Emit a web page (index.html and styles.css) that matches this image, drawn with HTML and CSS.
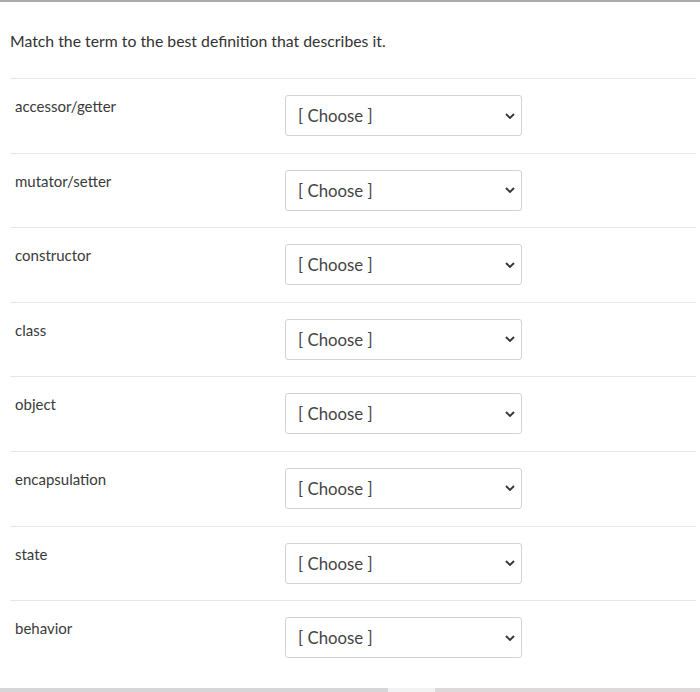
FILE: index.html
```html
<!DOCTYPE html>
<html>
<head>
<meta charset="utf-8">
<link rel="stylesheet" href="styles.css">
</head>
<body>
<div class="page">
  <p class="prompt">Match the term to the best definition that describes it.</p>
  <div class="rows">
    <div class="row"><div class="term">accessor/getter</div><div class="select"><span>[ Choose ]</span><svg class="chev" viewBox="0 0 10 6" width="10" height="6"><path d="M1 1 L5 5 L9 1" fill="none" stroke="#333" stroke-width="1.8"/></svg></div></div>
    <div class="row"><div class="term">mutator/setter</div><div class="select"><span>[ Choose ]</span><svg class="chev" viewBox="0 0 10 6" width="10" height="6"><path d="M1 1 L5 5 L9 1" fill="none" stroke="#333" stroke-width="1.8"/></svg></div></div>
    <div class="row"><div class="term">constructor</div><div class="select"><span>[ Choose ]</span><svg class="chev" viewBox="0 0 10 6" width="10" height="6"><path d="M1 1 L5 5 L9 1" fill="none" stroke="#333" stroke-width="1.8"/></svg></div></div>
    <div class="row"><div class="term">class</div><div class="select"><span>[ Choose ]</span><svg class="chev" viewBox="0 0 10 6" width="10" height="6"><path d="M1 1 L5 5 L9 1" fill="none" stroke="#333" stroke-width="1.8"/></svg></div></div>
    <div class="row"><div class="term">object</div><div class="select"><span>[ Choose ]</span><svg class="chev" viewBox="0 0 10 6" width="10" height="6"><path d="M1 1 L5 5 L9 1" fill="none" stroke="#333" stroke-width="1.8"/></svg></div></div>
    <div class="row"><div class="term">encapsulation</div><div class="select"><span>[ Choose ]</span><svg class="chev" viewBox="0 0 10 6" width="10" height="6"><path d="M1 1 L5 5 L9 1" fill="none" stroke="#333" stroke-width="1.8"/></svg></div></div>
    <div class="row"><div class="term">state</div><div class="select"><span>[ Choose ]</span><svg class="chev" viewBox="0 0 10 6" width="10" height="6"><path d="M1 1 L5 5 L9 1" fill="none" stroke="#333" stroke-width="1.8"/></svg></div></div>
    <div class="row"><div class="term">behavior</div><div class="select"><span>[ Choose ]</span><svg class="chev" viewBox="0 0 10 6" width="10" height="6"><path d="M1 1 L5 5 L9 1" fill="none" stroke="#333" stroke-width="1.8"/></svg></div></div>
  </div>
</div>
<div class="bottombar"><div class="seg seg1"></div><div class="seg seg2"></div><div class="seg seg3"></div></div>
</body>
</html>
```
FILE: styles.css
```css
html, body {
  margin: 0;
  padding: 0;
  background: #fff;
}
body {
  width: 700px;
  height: 692px;
  overflow: hidden;
  display: flex;
  flex-direction: column;
  font-family: Lato, "Liberation Sans", sans-serif;
  color: #333;
}
.page {
  border-top: 2px solid #ababab;
  padding: 0 4px 0 10px;
  flex: 1;
}
.prompt {
  margin: 29px 0 27px 0;
  font-size: 15.8px;
  line-height: 20px;
  color: #333;
}
.rows {
  display: flex;
  flex-direction: column;
}
.row {
  display: flex;
  align-items: flex-start;
  border-top: 1px solid #e6e6e6;
  padding: 16px 0 16.6px 5px;
}
.term {
  width: 270px;
  font-size: 15px;
  line-height: 20px;
  padding-top: 1px;
  color: #3a3a3a;
}
.select {
  box-sizing: border-box;
  width: 237px;
  height: 41px;
  border: 1px solid #d3d3d3;
  border-radius: 3px;
  display: flex;
  align-items: center;
  justify-content: space-between;
  padding: 0 6px 0 12px;
  font-size: 16.8px;
  color: #444;
}
.chev {
  display: block;
}
.bottombar {
  display: flex;
  height: 4px;
}
.seg1 { width: 388px; background: #d6d6d8; }
.seg2 { width: 47px; background: #f2f2f2; }
.seg3 { flex: 1; background: #ddd8da; }
```
